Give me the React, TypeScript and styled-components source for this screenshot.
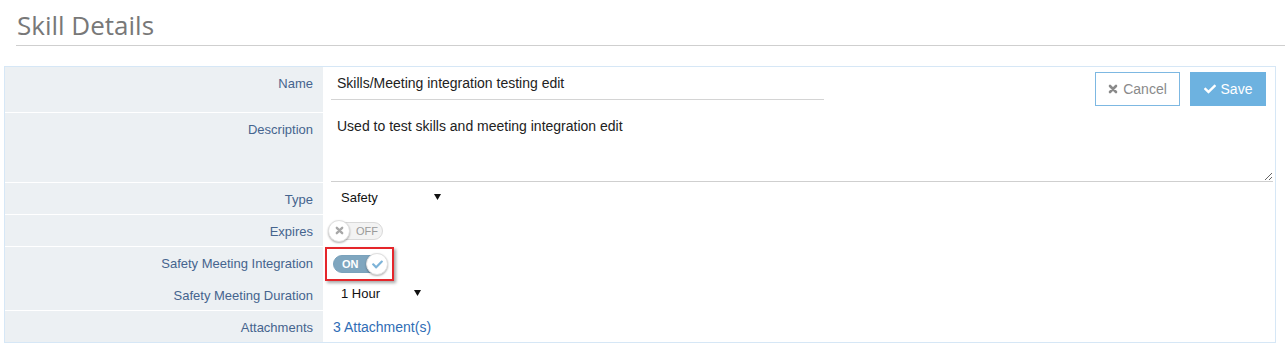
import React from 'react';
import styled, { createGlobalStyle } from 'styled-components';
import { FaCheck } from 'react-icons/fa';

const GlobalStyle = createGlobalStyle`
  body {
    margin: 0;
    background: #fff;
    font-family: "Liberation Sans", Arial, sans-serif;
  }
`;

const Page = styled.div`
  width: 1285px;
`;

const Header = styled.div`
  margin-left: 16px;
  padding: 7px 0 1px 1px;
  border-bottom: 1px solid #cfcfcf;
`;

const Title = styled.h1`
  margin: 0;
  font-family: "Open Sans", sans-serif;
  font-weight: 400;
  font-size: 26px;
  line-height: 37px;
  color: #787878;
`;

const Panel = styled.div`
  margin: 20px 9px 0 4px;
  border: 1px solid #d6e7f6;
`;

const Row = styled.div<{ $h: number }>`
  display: grid;
  grid-template-columns: 318px 1fr;
  height: ${(p) => p.$h}px;
  & + & {
    border-top: 1px solid #fff;
  }
`;

const Label = styled.div`
  background: #ecf0f3;
  text-align: right;
  padding: 8px 10px 0 0;
  font-size: 13px;
  line-height: 17px;
  color: #45648e;
`;

const Cell = styled.div<{ $pl?: number }>`
  display: flex;
  align-items: center;
  padding-left: ${(p) => p.$pl ?? 8}px;
  min-width: 0;
`;

const NameCell = styled(Cell)`
  justify-content: space-between;
  align-items: flex-start;
`;

const NameInput = styled.input`
  width: 493px;
  height: 33px;
  box-sizing: border-box;
  padding: 0 6px;
  border: none;
  border-bottom: 1px solid #d4d4d4;
  outline: none;
  font-family: inherit;
  font-size: 14px;
  color: #222;
  background: transparent;
`;

const Actions = styled.div`
  display: flex;
  gap: 10px;
  margin: 5px 9px 0 0;
`;

const Button = styled.button<{ $primary?: boolean; $w: number }>`
  display: flex;
  align-items: center;
  justify-content: center;
  gap: 5px;
  width: ${(p) => p.$w}px;
  height: 34px;
  box-sizing: border-box;
  border: 1px solid ${(p) => (p.$primary ? '#6db2e0' : '#7db8e2')};
  background: ${(p) => (p.$primary ? '#6db2e0' : '#fff')};
  color: ${(p) => (p.$primary ? '#fff' : '#8a8a8a')};
  font-family: inherit;
  font-size: 14px;
  padding: 0;
  cursor: pointer;
  svg {
    font-size: 12px;
  }
`;

const DescCell = styled(Cell)`
  padding-right: 2px;
  align-items: stretch;
`;

const Description = styled.textarea`
  width: 100%;
  height: 69px;
  box-sizing: border-box;
  padding: 5px 6px;
  border: none;
  border-bottom: 1px solid #cfcfcf;
  outline: none;
  font-family: inherit;
  font-size: 14px;
  line-height: 17px;
  color: #222;
  resize: vertical;
`;

const SelectBox = styled.div<{ $w: number }>`
  display: flex;
  align-items: center;
  justify-content: space-between;
  width: ${(p) => p.$w}px;
  height: 28px;
  box-sizing: border-box;
  padding: 0 8px;
  margin-bottom: 3px;
  font-size: 13px;
  color: #111;
`;

const Toggle = styled.div`
  position: relative;
  display: flex;
  align-items: center;
  width: 56px;
  height: 22px;
`;

const Track = styled.div<{ $on?: boolean }>`
  display: flex;
  align-items: center;
  width: 54px;
  height: 18px;
  margin-left: 1px;
  box-sizing: border-box;
  border-radius: 9px;
  border: 1px solid ${(p) => (p.$on ? '#7aa2bc' : '#d9d9d9')};
  background: ${(p) => (p.$on ? '#7fa6bf' : '#f3f3f3')};
  padding-left: ${(p) => (p.$on ? 8 : 26)}px;
  font-size: 11px;
  font-weight: ${(p) => (p.$on ? 700 : 400)};
  color: ${(p) => (p.$on ? '#fff' : '#9a9a9a')};
`;

const Knob = styled.span<{ $on?: boolean }>`
  position: absolute;
  top: 0;
  ${(p) => (p.$on ? 'right: 0;' : 'left: 0;')}
  width: 22px;
  height: 22px;
  box-sizing: border-box;
  border-radius: 50%;
  background: #fff;
  border: 1px solid #e0e0e0;
  box-shadow: 0 1px 2px rgba(0, 0, 0, 0.3);
  display: flex;
  align-items: center;
  justify-content: center;
  color: ${(p) => (p.$on ? '#7db3d8' : '#a8a8a8')};
  font-size: 11px;
`;

const Highlight = styled.div`
  position: relative;
  z-index: 1;
  margin-left: 2px;
  padding: 4px 4px 4px 5px;
  border: 2px solid #e5262b;
  box-shadow: 2px 2px 3px rgba(0, 0, 0, 0.35);
`;

const Link = styled.a`
  font-size: 14px;
  color: #2f6db5;
  text-decoration: none;
`;

const Arrow = () => (
  <svg width="7" height="6" viewBox="0 0 7 6">
    <path d="M0 0h7L3.5 6z" fill="#111" />
  </svg>
);

const Cross = ({ size = 10 }: { size?: number }) => (
  <svg width={size} height={size} viewBox="0 0 10 10">
    <path
      d="M2 2l6 6M8 2L2 8"
      stroke="currentColor"
      strokeWidth="2.6"
      strokeLinecap="round"
    />
  </svg>
);

const Switch = ({ on }: { on?: boolean }) => (
  <Toggle>
    <Track $on={on}>{on ? 'ON' : 'OFF'}</Track>
    <Knob $on={on}>{on ? <FaCheck /> : <Cross size={9} />}</Knob>
  </Toggle>
);

const App = () => {
  return (
    <Page>
      <GlobalStyle />
      <Header>
        <Title>Skill Details</Title>
      </Header>
      <Panel>
        <Row $h={45}>
          <Label>Name</Label>
          <NameCell>
            <NameInput defaultValue="Skills/Meeting integration testing edit" />
            <Actions>
              <Button $w={85}>
                <Cross />
                Cancel
              </Button>
              <Button $primary $w={76}>
                <FaCheck />
                Save
              </Button>
            </Actions>
          </NameCell>
        </Row>
        <Row $h={69}>
          <Label>Description</Label>
          <DescCell>
            <Description defaultValue="Used to test skills and meeting integration edit" />
          </DescCell>
        </Row>
        <Row $h={31}>
          <Label>Type</Label>
          <Cell $pl={10}>
            <SelectBox $w={116}>
              <span>Safety</span>
              <Arrow />
            </SelectBox>
          </Cell>
        </Row>
        <Row $h={31}>
          <Label>Expires</Label>
          <Cell $pl={5}>
            <Switch />
          </Cell>
        </Row>
        <Row $h={31}>
          <Label>Safety Meeting Integration</Label>
          <Cell $pl={0}>
            <Highlight>
              <Switch on />
            </Highlight>
          </Cell>
        </Row>
        <Row $h={31}>
          <Label>Safety Meeting Duration</Label>
          <Cell $pl={10}>
            <SelectBox $w={96}>
              <span>1 Hour</span>
              <Arrow />
            </SelectBox>
          </Cell>
        </Row>
        <Row $h={31}>
          <Label>Attachments</Label>
          <Cell $pl={10}>
            <Link href="#">3 Attachment(s)</Link>
          </Cell>
        </Row>
      </Panel>
    </Page>
  );
};

export default App;
